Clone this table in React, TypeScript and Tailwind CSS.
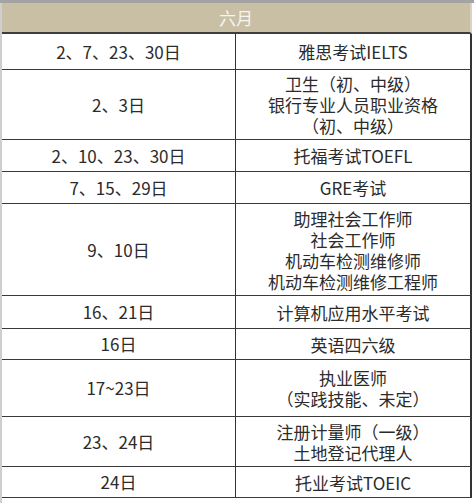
const rows: { date: string; exam: string[]; h: string }[] = [
  { date: "2、7、23、30日", exam: ["雅思考试IELTS"], h: "h-[36px]" },
  { date: "2、3日", exam: ["卫生（初、中级）", "银行专业人员职业资格", "（初、中级）"], h: "h-[70px]" },
  { date: "2、10、23、30日", exam: ["托福考试TOEFL"], h: "h-[32px]" },
  { date: "7、15、29日", exam: ["GRE考试"], h: "h-[32px]" },
  { date: "9、10日", exam: ["助理社会工作师", "社会工作师", "机动车检测维修师", "机动车检测维修工程师"], h: "h-[92px]" },
  { date: "16、21日", exam: ["计算机应用水平考试"], h: "h-[33px]" },
  { date: "16日", exam: ["英语四六级"], h: "h-[31px]" },
  { date: "17~23日", exam: ["执业医师", "（实践技能、未定）"], h: "h-[57px]" },
  { date: "23、24日", exam: ["注册计量师（一级）", "土地登记代理人"], h: "h-[50px]" },
  { date: "24日", exam: ["托业考试TOEIC"], h: "h-[31px]" },
]

export default function App() {
  return (
    <div
      className="w-[474px] h-[503px] bg-white border-t-[3px] border-[#a3a3a3] flex"
      style={{ fontFamily: '"Noto Sans CJK SC", "Noto Sans", sans-serif' }}
    >
      <div className="w-[2px] bg-[#cfcfcf]" />
      <div className="w-[470px] flex flex-col">
        <div className="h-[31px] bg-[#c8bfa5] border-b-2 border-[#3d3d3d] flex items-center justify-center text-[17px] text-[#f7f5ef] border-r-2 border-r-[#d8d3c4]">
          六月
        </div>
        {rows.map((r) => (
          <div key={r.date} className={`${r.h} flex border-b-[1.5px] border-[#3a3a3a]`}>
            <div className="w-[234px] flex items-center justify-center text-[17px] text-[#2b2b2b] border-r border-[#333]">
              {r.date}
            </div>
            <div className="flex-1 flex flex-col items-center justify-center text-[17px] leading-[21px] text-[#2b2b2b] border-r-2 border-[#333]">
              {r.exam.map((e) => (
                <div key={e} className="h-[21px]">{e}</div>
              ))}
            </div>
          </div>
        ))}
      </div>
    </div>
  )
}
